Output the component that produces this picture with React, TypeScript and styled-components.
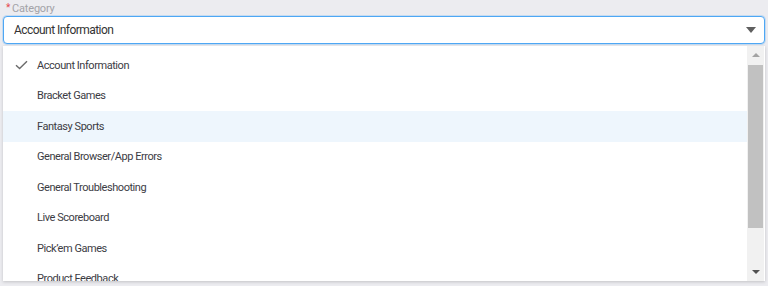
import React from "react";
import styled, { createGlobalStyle } from "styled-components";

const Global = createGlobalStyle`
  html, body { margin: 0; padding: 0; background: #ececf0; }
  body { font-family: Roboto, "Noto Sans", Arial, sans-serif; }
`;

const Page = styled.div`
  width: 768px;
  height: 286px;
  padding: 0 3px;
  box-sizing: border-box;
  overflow: hidden;
`;

const Label = styled.div`
  height: 16px;
  display: flex;
  align-items: center;
  padding-left: 3px;
  font-size: 11px;
  letter-spacing: -0.2px;
  color: #a3a3a8;
  gap: 2px;
`;

const Star = styled.span`
  color: #e5484d;
  font-size: 10px;
  position: relative;
  top: -1px;
`;

const Select = styled.div`
  height: 28px;
  box-sizing: border-box;
  border: 1px solid #4ea7f4;
  box-shadow: 0 0 0 1px rgba(78, 167, 244, 0.25);
  border-radius: 4px;
  background: #fff;
  display: flex;
  align-items: center;
  justify-content: space-between;
  padding: 0 8px 0 10px;
  font-size: 12px;
  letter-spacing: -0.55px;
  color: #333;
`;

const Caret = styled.span`
  width: 0;
  height: 0;
  border-left: 5px solid transparent;
  border-right: 5px solid transparent;
  border-top: 6px solid #5f5f5f;
`;

const Dropdown = styled.div`
  margin-top: 2px;
  height: 235px;
  background: #fff;
  display: flex;
  box-shadow: 0 1px 3px rgba(0, 0, 0, 0.18);
  overflow: hidden;
`;

const List = styled.ul`
  list-style: none;
  margin: 0;
  padding: 4px 0 0 0;
  flex: 1;
  overflow: hidden;
`;

const Row = styled.li<{ $hover?: boolean }>`
  height: 30.5px;
  display: flex;
  align-items: center;
  padding-left: 12px;
  font-size: 11px;
  letter-spacing: -0.45px;
  color: #3c3c44;
  background: ${(p) => (p.$hover ? "#eef6fd" : "transparent")};
`;

const CheckSlot = styled.span`
  width: 22px;
  display: flex;
  align-items: center;
`;

const Scrollbar = styled.div`
  width: 17px;
  background: #f1f1f1;
  display: flex;
  flex-direction: column;
  align-items: stretch;
  margin-right: 1px;
`;

const ScrollBtn = styled.div`
  height: 18px;
  display: flex;
  align-items: center;
  justify-content: center;
`;

const Arrow = styled.span<{ $up?: boolean }>`
  width: 0;
  height: 0;
  border-left: 4px solid transparent;
  border-right: 4px solid transparent;
  ${(p) =>
    p.$up
      ? "border-bottom: 4px solid #a3a3a3;"
      : "border-top: 4px solid #505050;"}
`;

const Track = styled.div`
  flex: 1;
  padding: 1px 1px 0 1px;
  display: flex;
  flex-direction: column;
`;

const Thumb = styled.div`
  height: 163px;
  background: #c1c1c1;
`;

const items = [
  "Account Information",
  "Bracket Games",
  "Fantasy Sports",
  "General Browser/App Errors",
  "General Troubleshooting",
  "Live Scoreboard",
  "Pick’em Games",
  "Product Feedback",
];

export default function App() {
  return (
    <Page>
      <Global />
      <Label>
        <Star>*</Star>Category
      </Label>
      <Select>
        <span>Account Information</span>
        <Caret />
      </Select>
      <Dropdown>
        <List>
          {items.map((it, i) => (
            <Row key={it} $hover={i === 2}>
              <CheckSlot>
                {i === 0 && (
                  <svg width="13" height="10" viewBox="0 0 13 10">
                    <path d="M1 5.2 L4.6 8.6 L12 1.2" fill="none" stroke="#6b6b6b" strokeWidth="1.4" />
                  </svg>
                )}
              </CheckSlot>
              {it}
            </Row>
          ))}
        </List>
        <Scrollbar>
          <ScrollBtn>
            <Arrow $up />
          </ScrollBtn>
          <Track>
            <Thumb />
          </Track>
          <ScrollBtn>
            <Arrow />
          </ScrollBtn>
        </Scrollbar>
      </Dropdown>
    </Page>
  );
}
